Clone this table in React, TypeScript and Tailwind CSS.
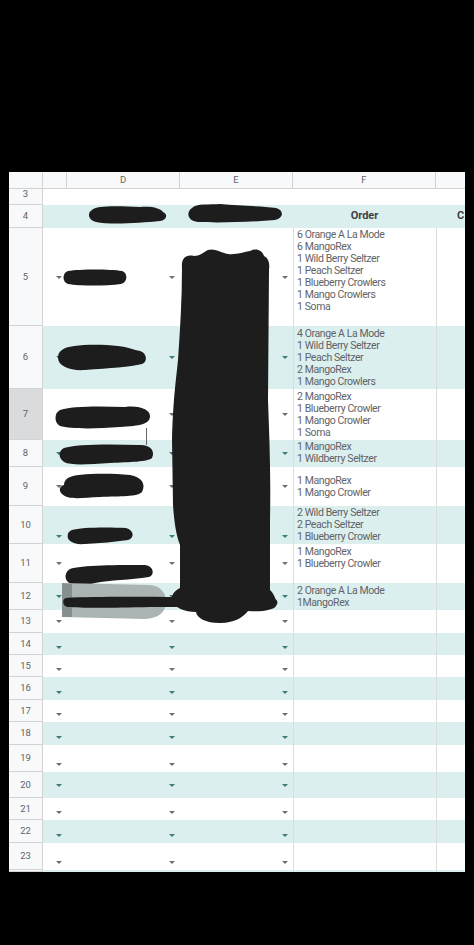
import React from 'react'

type Row = {
  n: number
  h: string
  band: boolean
  lines?: string[]
  text?: string
  caret?: 'center' | 'bottom'
  selected?: boolean
  header?: boolean
}

const rows: Row[] = [
  { n: 3, h: 'h-[16px]', band: false },
  { n: 4, h: 'h-[23px]', band: true, header: true },
  {
    n: 5,
    h: 'h-[98px]',
    band: false,
    caret: 'center',
    text: 'pt-[1px]',
    lines: [
      '6 Orange A La Mode',
      '6 MangoRex',
      '1 Wild Berry Seltzer',
      '1 Peach Seltzer',
      '1 Blueberry Crowlers',
      '1 Mango Crowlers',
      '1 Soma',
    ],
  },
  {
    n: 6,
    h: 'h-[63px]',
    band: true,
    caret: 'center',
    text: 'pt-[2px]',
    lines: ['4 Orange A La Mode', '1 Wild Berry Seltzer', '1 Peach Seltzer', '2 MangoRex', '1 Mango Crowlers'],
  },
  {
    n: 7,
    h: 'h-[51px]',
    band: false,
    caret: 'center',
    selected: true,
    text: 'pt-[2px]',
    lines: ['2 MangoRex', '1 Blueberry Crowler', '1 Mango Crowler', '1 Soma'],
  },
  { n: 8, h: 'h-[27px]', band: true, caret: 'center', text: 'pt-[1px]', lines: ['1 MangoRex', '1 Wildberry Seltzer'] },
  { n: 9, h: 'h-[39px]', band: false, caret: 'center', text: 'justify-center', lines: ['1 MangoRex', '1 Mango Crowler'] },
  {
    n: 10,
    h: 'h-[38px]',
    band: true,
    caret: 'bottom',
    text: 'pt-[1px]',
    lines: ['2 Wild Berry Seltzer', '2 Peach Seltzer', '1 Blueberry Crowler'],
  },
  { n: 11, h: 'h-[39px]', band: false, caret: 'center', text: 'pt-[2px]', lines: ['1 MangoRex', '1 Blueberry Crowler'] },
  { n: 12, h: 'h-[27px]', band: true, caret: 'center', text: 'pt-[2px]', lines: ['2 Orange A La Mode', '1MangoRex'] },
  { n: 13, h: 'h-[23px]', band: false, caret: 'center' },
  { n: 14, h: 'h-[22px]', band: true, caret: 'bottom' },
  { n: 15, h: 'h-[22px]', band: false, caret: 'bottom' },
  { n: 16, h: 'h-[23px]', band: true, caret: 'bottom' },
  { n: 17, h: 'h-[22px]', band: false, caret: 'bottom' },
  { n: 18, h: 'h-[23px]', band: true, caret: 'bottom' },
  { n: 19, h: 'h-[27px]', band: false, caret: 'bottom' },
  { n: 20, h: 'h-[26px]', band: true, caret: 'center' },
  { n: 21, h: 'h-[22px]', band: false, caret: 'bottom' },
  { n: 22, h: 'h-[23px]', band: true, caret: 'bottom' },
  { n: 23, h: 'h-[27px]', band: false, caret: 'bottom' },
  { n: 24, h: 'h-[2px]', band: true },
]

function Caret({ teal }: { teal: boolean }) {
  return (
    <svg width="6" height="3" viewBox="0 0 6 3" className="block">
      <path d="M0 0h6L3 3z" fill={teal ? '#3f7b7b' : '#6f6f6f'} />
    </svg>
  )
}

function DropCell({ w, row }: { w: string; row: Row }) {
  const align = row.caret === 'bottom' ? 'items-end pb-[6px]' : 'items-center'
  return (
    <div className={`${w} h-full flex justify-end pr-[5px] ${align}`}>
      {row.caret && <Caret teal={row.band} />}
    </div>
  )
}

function SheetRow({ row }: { row: Row }) {
  const bg = row.band ? 'bg-[#dcefef]' : 'bg-white'
  const head = row.selected ? 'bg-[#dadbdc]' : 'bg-[#f8f9fa]'
  const line = row.n >= 5 ? 'border-l border-[#dcdcdc]' : ''

  return (
    <div className={`flex ${row.h} overflow-hidden`}>
      <div
        className={`w-[34px] shrink-0 border-r border-b border-[#d3d3d3] ${head} flex justify-center ${
          row.n === 3 ? 'items-start' : 'items-center'
        } text-[9.5px] leading-[10px] text-[#5f6368]`}
      >
        {row.n < 24 && row.n}
      </div>
      <div className={`flex flex-1 ${bg}`}>
        {row.header ? (
          <>
            <div className="w-[24px]" />
            <div className="w-[113px]" />
            <div className="w-[113px]" />
            <div className="w-[143px] flex items-center justify-center text-[11px] font-bold text-[#3c4043]">
              Order
            </div>
            <div className="w-[28px] flex items-center pl-[21px] text-[11px] font-bold text-[#3c4043] whitespace-nowrap overflow-hidden">
              Co
            </div>
          </>
        ) : (
          <>
            <DropCell w="w-[24px]" row={row} />
            <DropCell w="w-[113px]" row={row} />
            <DropCell w="w-[113px]" row={row} />
            <div
              className={`w-[143px] h-full flex flex-col ${row.text ?? ''} pl-[3px] ${line} text-[10.5px] leading-[12px] tracking-[-0.4px] text-[#5f6368] whitespace-nowrap`}
            >
              {row.lines?.map((l) => (
                <div key={l}>{l}</div>
              ))}
            </div>
            <div className={`w-[28px] h-full ${line}`} />
          </>
        )}
      </div>
    </div>
  )
}

function Redactions() {
  return (
    <svg className="absolute inset-0 pointer-events-none" width="474" height="945" viewBox="0 0 474 945">
      <g fill="#1d1d1d">
        <path d="M92,210 C96,205 120,206 140,207 C152,206 160,208 163,212 C168,214 167,220 160,221 C140,223 110,225 96,222 C88,220 87,213 92,210 Z" />
        <path d="M192,208 C196,203 210,205 220,204 C240,206 262,206 276,208 C284,210 284,218 275,220 C250,222 220,223 198,222 C187,221 186,212 192,208 Z" />
        <path d="M68,271 C80,269 110,269 122,271 C128,273 128,282 121,284 C105,286 80,286 68,284 C62,282 62,273 68,271 Z" />
        <path d="M62,350 C68,344 100,344 118,346 C128,347 134,350 140,351 C147,353 148,362 142,364 C130,367 110,368 85,370 C70,371 58,366 58,358 C58,354 59,352 62,350 Z" />
        <path d="M60,410 C70,406 100,406 125,407 C140,405 150,410 150,416 C150,424 140,426 120,427 C95,429 70,429 60,426 C54,423 54,413 60,410 Z" />
        <path d="M64,448 C75,444 110,444 140,445 C152,445 155,452 152,458 C148,462 130,462 110,463 C90,464 72,466 64,462 C58,458 58,451 64,448 Z" />
        <path d="M68,478 C75,473 110,473 130,475 C142,477 146,484 142,492 C138,497 120,496 100,497 C80,498 68,500 62,494 C58,490 60,486 64,485 C64,482 65,480 68,478 Z" />
        <path d="M72,530 C80,527 110,527 126,528 C134,530 135,538 128,540 C115,542 100,543 85,544 C72,545 66,540 68,534 C68,532 70,531 72,530 Z" />
        <path d="M70,569 C80,565 120,565 145,565 C154,566 155,575 149,577 C130,580 110,580 95,583 C85,586 72,587 68,582 C64,578 65,572 70,569 Z" />
      </g>
      <path d="M146.5,428 L146.5,445" stroke="#666" strokeWidth="1" />
      <path d="M62,583 L150,585 C162,586 167,595 166,603 C165,613 158,618 145,619 L62,617 Z" fill="#aab4b2" />
      <path d="M62,583 L72,584 L72,617 L62,617 Z" fill="#86918f" />
      <path
        fill="#1d1d1d"
        d="M182,268 C181,258 186,254 194,256 C200,256 204,252 208,250 C214,248 220,252 228,254 C236,255 244,252 250,251 C256,248 262,250 264,256 C268,258 270,262 269,270 L268,400 C269,430 271,470 270,520 L270,590 C274,594 277,600 276,606 C274,610 262,612 248,611 C244,616 236,623 220,623 C205,623 197,618 196,612 C185,612 174,608 172,600 C171,594 176,590 180,588 L180,545 C176,535 174,520 173,505 L172,440 C173,400 176,380 178,360 C180,330 182,300 182,268 Z"
      />
      <path
        fill="#1d1d1d"
        d="M66,598 C100,596 180,597 230,598 L275,599 C279,601 278,606 273,607 L150,607 C110,608 80,608 68,607 C62,606 62,599 66,598 Z"
      />
    </svg>
  )
}

export default function App() {
  return (
    <div className="relative w-[474px] h-[945px] bg-black overflow-hidden" style={{ fontFamily: 'Roboto, "Liberation Sans", sans-serif' }}>
      <div className="pt-[172px] pl-[9px]">
        <div className="w-[456px] h-[700px] bg-white overflow-hidden">
          {/* column letters */}
          <div className="flex h-[17px] bg-[#f8f9fa] border-b border-[#d3d3d3] text-[9.5px] text-[#5f6368]">
            <div className="w-[34px] border-r border-[#d3d3d3]" />
            <div className="w-[24px] border-r border-[#d3d3d3]" />
            <div className="w-[113px] border-r border-[#d3d3d3] flex items-center justify-center">D</div>
            <div className="w-[113px] border-r border-[#d3d3d3] flex items-center justify-center">E</div>
            <div className="w-[143px] border-r border-[#d3d3d3] flex items-center justify-center">F</div>
            <div className="w-[29px]" />
          </div>
          {rows.map((r) => (
            <SheetRow key={r.n} row={r} />
          ))}
        </div>
      </div>
      <Redactions />
    </div>
  )
}
